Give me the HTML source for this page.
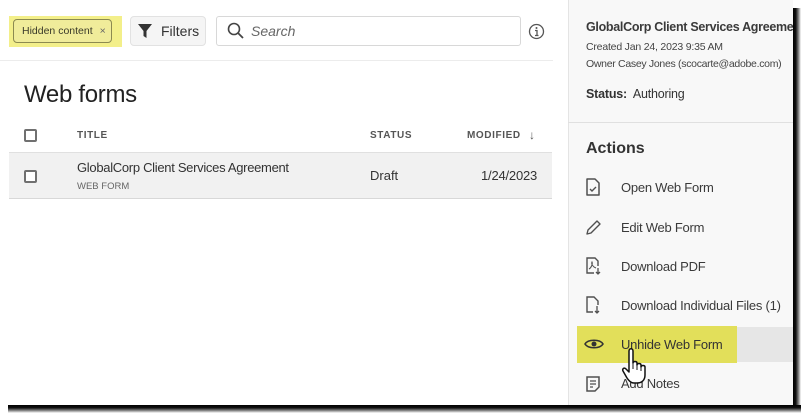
<!DOCTYPE html>
<html><head><style>
*{margin:0;padding:0;box-sizing:border-box}
body{width:801px;height:416px;background:#fff;position:relative;overflow:hidden;font-family:"Liberation Sans",sans-serif;color:#2c2c2c}
.a{position:absolute}
.shr{left:793px;top:8px;width:8px;height:404px;background:linear-gradient(90deg,#000 0,#111 35%,#888 70%,#fff)}
.shb{left:8px;top:405px;width:793px;height:8px;background:linear-gradient(180deg,#000 0,#111 35%,#888 70%,#fff)}
.cb{width:13px;height:13px;border:2px solid #707070;border-radius:2px;background:#fff}
.act{font-size:13px;color:#3a3a3a;letter-spacing:-.25px}
</style></head><body>
<div class="a" style="left:0;top:0;width:793px;height:405px;background:#fff"></div>
<div class="a" style="left:9px;top:16px;width:113px;height:31px;background:#f3ef8a"></div>
<div class="a" style="left:13px;top:19px;width:99px;height:24px;border:1px solid #8c8a50;border-radius:4px;background:#f0ec9a;font-size:10.5px;line-height:22px;padding-left:8px;color:#3a3a2a;white-space:nowrap">Hidden content <span style="margin-left:4px;color:#666">×</span></div>
<div class="a" style="left:130px;top:16px;width:76px;height:30px;border:1px solid #e2e2e2;border-radius:4px;background:#f5f5f5;font-size:14px;line-height:28px;padding-left:30px;color:#333">Filters</div>
<svg class="a" style="left:137px;top:23px" width="16" height="16" viewBox="0 0 16 16"><path d="M1 1h14l-5.5 7v7l-3-2V8z" fill="#333"/></svg>
<div class="a" style="left:216px;top:16px;width:305px;height:30px;border:1px solid #d8d8d8;border-radius:3px;font-size:14px;line-height:28px;padding-left:34px;font-style:italic;color:#666">Search</div>
<svg class="a" style="left:227px;top:22px" width="18" height="18" viewBox="0 0 18 18"><circle cx="7" cy="7" r="5.5" fill="none" stroke="#444" stroke-width="1.6"/><path d="M11 11l5 5" stroke="#444" stroke-width="1.8"/></svg>
<svg class="a" style="left:528px;top:23px" width="17" height="17" viewBox="0 0 17 17"><circle cx="8.5" cy="8.5" r="7" fill="none" stroke="#555" stroke-width="1.3"/><circle cx="8.5" cy="5" r="1" fill="#555"/><path d="M7 7.5h2v5M7 12.5h3.5" stroke="#555" stroke-width="1.3" fill="none"/></svg>
<div class="a" style="left:0;top:60px;width:553px;height:1px;background:#ececec"></div>
<div class="a" style="left:24px;top:81px;font-size:24px;color:#222;letter-spacing:-.3px">Web forms</div>
<div class="a cb" style="left:24px;top:129px"></div>
<div class="a" style="left:77px;top:130px;font-size:10px;font-weight:bold;letter-spacing:.6px;color:#555">TITLE</div>
<div class="a" style="left:370px;top:130px;font-size:10px;font-weight:bold;letter-spacing:.6px;color:#555">STATUS</div>
<div class="a" style="left:467px;top:130px;font-size:10px;font-weight:bold;letter-spacing:.6px;color:#555">MODIFIED</div>
<div class="a" style="left:529px;top:128px;font-size:12px;color:#555">↓</div>
<div class="a" style="left:9px;top:152px;width:543px;height:47px;background:#f1f1f1;border-top:1px solid #e0e0e0;border-bottom:1px solid #d8d8d8"></div>
<div class="a cb" style="left:24px;top:170px"></div>
<div class="a" style="left:77px;top:160px;font-size:13px;color:#333;letter-spacing:-.3px">GlobalCorp Client Services Agreement</div>
<div class="a" style="left:77px;top:181px;font-size:9.5px;color:#666">WEB FORM</div>
<div class="a" style="left:370px;top:168px;font-size:13px;color:#333">Draft</div>
<div class="a" style="left:481px;top:168px;font-size:13px;color:#333;letter-spacing:-.2px">1/24/2023</div>
<div class="a" style="left:568px;top:0;width:225px;height:405px;background:#f8f8f8;border-left:1px solid #e4e4e4"></div>
<div class="a" style="left:568px;top:122px;width:225px;height:1px;background:#e0e0e0"></div>
<div class="a" style="left:586px;top:20px;width:207px;overflow:hidden;font-size:12.5px;font-weight:bold;color:#3a3a3a;white-space:nowrap;letter-spacing:-.3px">GlobalCorp Client Services Agreement</div>
<div class="a" style="left:586px;top:41px;font-size:10.5px;color:#444;letter-spacing:-.2px">Created Jan 24, 2023 9:35 AM</div>
<div class="a" style="left:586px;top:58px;font-size:10.5px;color:#444;white-space:nowrap;letter-spacing:-.3px">Owner Casey Jones (scocarte@adobe.com)</div>
<div class="a" style="left:586px;top:87px;font-size:12.5px;color:#333;letter-spacing:-.2px"><b>Status:</b>&nbsp; Authoring</div>
<div class="a" style="left:586px;top:140px;font-size:16px;font-weight:bold;color:#333">Actions</div>
<div class="a" style="left:577px;top:327px;width:216px;height:35px;background:#e6e6e6"></div>
<div class="a" style="left:577px;top:326px;width:160px;height:37px;background:#e2df5a"></div>
<div class="a act" style="left:621px;top:180px">Open Web Form</div>
<div class="a act" style="left:621px;top:220px">Edit Web Form</div>
<div class="a act" style="left:621px;top:259px">Download PDF</div>
<div class="a act" style="left:621px;top:298px">Download Individual Files (1)</div>
<div class="a act" style="left:621px;top:337px;color:#333">Unhide Web Form</div>
<div class="a act" style="left:621px;top:376px">Add Notes</div>
<svg class="a" style="left:584px;top:177px" width="18" height="20" viewBox="0 0 18 20"><path d="M3 2h8l4 4v12H3z" fill="none" stroke="#505050" stroke-width="1.5" stroke-linejoin="round"/><path d="M6 12l2 2 4-4" fill="none" stroke="#505050" stroke-width="1.4"/></svg>
<svg class="a" style="left:584px;top:217px" width="18" height="20" viewBox="0 0 18 20"><path d="M3 17l1-4L13 4l3 3-9 9z" fill="none" stroke="#505050" stroke-width="1.4" stroke-linejoin="round"/></svg>
<svg class="a" style="left:584px;top:256px" width="18" height="20" viewBox="0 0 18 20"><path d="M10 17H3V2h8l3 3v5" fill="none" stroke="#505050" stroke-width="1.4"/><path d="M5 13c2-1 4-5 3-7-1 2 1 5 4 6" fill="none" stroke="#505050" stroke-width="1"/><path d="M14 12v6M12 16l2 2 2-2" fill="none" stroke="#505050" stroke-width="1.3"/></svg>
<svg class="a" style="left:584px;top:295px" width="18" height="20" viewBox="0 0 18 20"><path d="M9 17H3V2h7l4 4v4" fill="none" stroke="#505050" stroke-width="1.4"/><path d="M13 11v7M11 16l2 2 2-2" fill="none" stroke="#505050" stroke-width="1.3"/></svg>
<svg class="a" style="left:584px;top:336px" width="20" height="16" viewBox="0 0 20 16"><path d="M1 8c3-5 15-5 18 0-3 5-15 5-18 0z" fill="none" stroke="#333" stroke-width="1.6"/><circle cx="10" cy="8" r="2.5" fill="#333"/></svg>
<svg class="a" style="left:584px;top:374px" width="18" height="20" viewBox="0 0 18 20"><path d="M3 3h12v10l-4 4H3z" fill="none" stroke="#505050" stroke-width="1.5"/><path d="M6 7h6M6 10h6M6 13h3" stroke="#505050" stroke-width="1.2"/></svg>
<svg class="a" style="left:620px;top:347px" width="34" height="38" viewBox="0 0 34 38"><path d="M9 4c0-3 4-3 4 0v12c0-2 4-2 4 0v2c0-2 4-2 4 0v2c0-2 4-2 4 0v8c0 5-3 8-8 8h-3c-3 0-5-2-7-5l-4-7c-1-2 1-4 3-2l3 3z" fill="#fff" stroke="#111" stroke-width="1.5" stroke-linejoin="round"/><path d="M13 16v6M17 18v5M21 20v4" stroke="#111" stroke-width="1"/></svg>
<div class="a shr"></div><div class="a shb"></div>
</body></html>
